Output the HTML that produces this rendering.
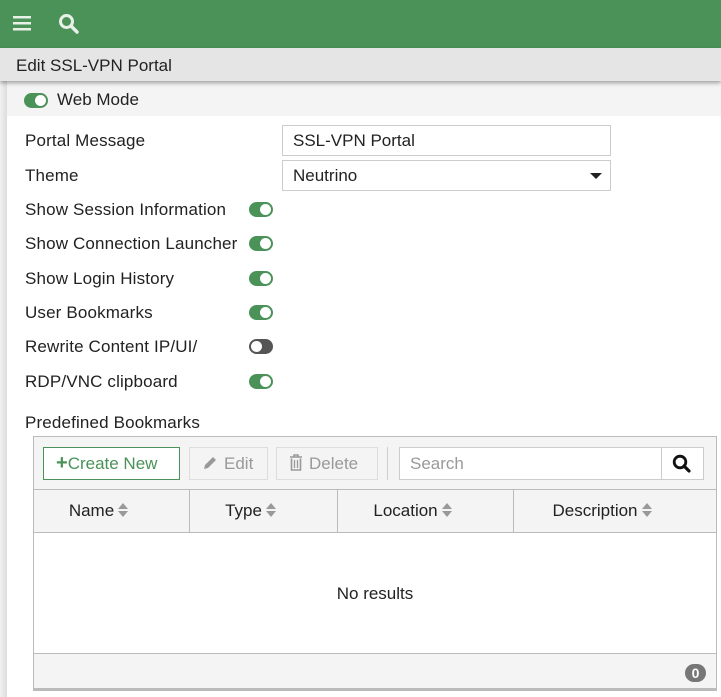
<!DOCTYPE html>
<html><head><style>
*{box-sizing:border-box;margin:0;padding:0}
body{width:721px;height:697px;overflow:hidden;background:#fff;font-family:"Liberation Sans",sans-serif;color:#222;font-size:17px;position:relative}
.abs{position:absolute}
.top{left:0;top:0;width:721px;height:48px;background:#4a9258}
.title{left:0;top:48px;width:721px;height:33px;background:#e5e5e5;box-shadow:0 2px 4px rgba(0,0,0,.35);z-index:2}
.title span{position:absolute;left:16px;top:8px;font-size:17px;color:#222}
.strip{left:0;top:81px;width:7px;height:616px;background:linear-gradient(90deg,#f2f2f2,#dcdcdc)}
.wm{left:7px;top:81px;width:714px;height:35px;background:#f4f4f4}
.tg{position:absolute;width:24px;height:15px;border-radius:8px;background:#4a9258}
.tg:after{content:"";position:absolute;right:2px;top:2px;width:11px;height:11px;border-radius:50%;background:#fff}
.tg.off{background:#555}
.tg.off:after{right:auto;left:2px}
.lbl{position:absolute;left:25px;font-size:17px;letter-spacing:0.15px}
.inp{position:absolute;left:282px;width:329px;height:31px;border:1px solid #ccc;background:#fff;padding:5px 10px;font-size:17px}
.tb{left:33px;top:436px;width:684px;height:255px;border:1px solid #bbb;border-bottom:3px solid #bbb;background:#f4f4f4}
.btn{position:absolute;top:10px;height:33px;border:1px solid #ddd;font-size:17px;color:#999;padding:6px 10px;background:#f4f4f4}
.th{position:absolute;top:52px;height:44px;border-top:1px solid #bbb;border-bottom:1px solid #bbb;width:100%;background:#f4f4f4}
.th div{position:absolute;top:0;height:42px;border-right:1px solid #bbb;text-align:center;padding-top:11px;padding-right:26px}
.sort{display:inline-block;width:10px;height:14px;vertical-align:-1px;margin-left:4px}
</style></head><body>
<div class="abs top">
<svg class="abs" style="left:13px;top:15px" width="18" height="16"><rect y="1" width="18" height="2.5" fill="#e8f0e8"/><rect y="7" width="18" height="2.5" fill="#e8f0e8"/><rect y="13" width="18" height="2.5" fill="#e8f0e8"/></svg>
<svg class="abs" style="left:58px;top:13px" width="22" height="22"><circle cx="8.5" cy="8.5" r="6" fill="none" stroke="#e8f0e8" stroke-width="3"/><line x1="13" y1="13" x2="19" y2="19" stroke="#e8f0e8" stroke-width="3.5" stroke-linecap="round"/></svg>
</div>
<div class="abs title"><span>Edit SSL-VPN Portal</span></div>
<div class="abs strip"></div>
<div class="abs wm"><div class="tg" style="left:17px;top:12px"></div><span style="position:absolute;left:50px;top:9px">Web Mode</span></div>
<div class="lbl" style="top:131px">Portal Message</div>
<div class="inp" style="top:125px">SSL-VPN Portal</div>
<div class="lbl" style="top:166px">Theme</div>
<div class="inp" style="top:160px">Neutrino<svg style="position:absolute;right:8px;top:12px" width="12" height="7"><path d="M0 0H12L6 6Z" fill="#222"/></svg></div>
<div class="lbl" style="top:200px">Show Session Information</div><div class="tg" style="left:249px;top:202px"></div>
<div class="lbl" style="top:234px">Show Connection Launcher</div><div class="tg" style="left:249px;top:236px"></div>
<div class="lbl" style="top:269px">Show Login History</div><div class="tg" style="left:249px;top:271px"></div>
<div class="lbl" style="top:303px">User Bookmarks</div><div class="tg" style="left:249px;top:305px"></div>
<div class="lbl" style="top:337px">Rewrite Content IP/UI/</div><div class="tg off" style="left:249px;top:339px"></div>
<div class="lbl" style="top:372px">RDP/VNC clipboard</div><div class="tg" style="left:249px;top:374px"></div>
<div class="lbl" style="top:413px">Predefined Bookmarks</div>
<div class="abs tb">
<div class="btn" style="left:9px;width:137px;border-color:#4a9258;color:#4a9258;background:#fff;padding-left:12px"><span style="font-weight:bold;font-size:20px;line-height:17px">+</span>Create New</div>
<div class="btn" style="left:155px;width:79px;padding-left:12px"><svg width="16" height="16" style="vertical-align:-2px;margin-right:6px"><path d="M2 14L3 10L11 2L14 5L6 13Z" fill="#999"/></svg>Edit</div>
<div class="btn" style="left:242px;width:102px;padding-left:12px"><svg width="14" height="17" style="vertical-align:-2px;margin-right:6px"><path d="M1 3H13M5 3V1H9V3M2.5 4.5V16H11.5V4.5" fill="none" stroke="#999" stroke-width="1.6"/><path d="M5.5 6V14M8.5 6V14" stroke="#999" stroke-width="1.3"/></svg>Delete</div>
<div style="position:absolute;left:353px;top:10px;width:1px;height:33px;background:#ccc"></div>
<div class="btn" style="left:365px;width:305px;background:#fff;color:#999;border-color:#ccc">Search</div>
<div class="btn" style="left:627px;width:43px;background:#fff;border-color:#ccc;padding:6px 10px"><svg width="20" height="20"><circle cx="8" cy="8" r="5.8" fill="none" stroke="#111" stroke-width="2.8"/><line x1="12" y1="12" x2="17" y2="17" stroke="#111" stroke-width="3.2" stroke-linecap="round"/></svg></div>
<div class="th">
<div style="left:0;width:156px">Name<svg class="sort"><path d="M0 6L5 0L10 6ZM0 8L5 14L10 8Z" fill="#999"/></svg></div>
<div style="left:156px;width:148px">Type<svg class="sort"><path d="M0 6L5 0L10 6ZM0 8L5 14L10 8Z" fill="#999"/></svg></div>
<div style="left:304px;width:176px">Location<svg class="sort"><path d="M0 6L5 0L10 6ZM0 8L5 14L10 8Z" fill="#999"/></svg></div>
<div style="left:480px;width:202px;border-right:none">Description<svg class="sort"><path d="M0 6L5 0L10 6ZM0 8L5 14L10 8Z" fill="#999"/></svg></div>
</div>
<div style="position:absolute;left:0;top:96px;width:682px;height:121px;background:#fff;border-bottom:1px solid #bbb;text-align:center;padding-top:51px">No results</div>
<div style="position:absolute;right:10px;top:227px;width:21px;height:18px;border-radius:9px;background:#777;color:#fff;font-size:14px;font-weight:bold;text-align:center;line-height:18px">0</div>
</div>
</body></html>
